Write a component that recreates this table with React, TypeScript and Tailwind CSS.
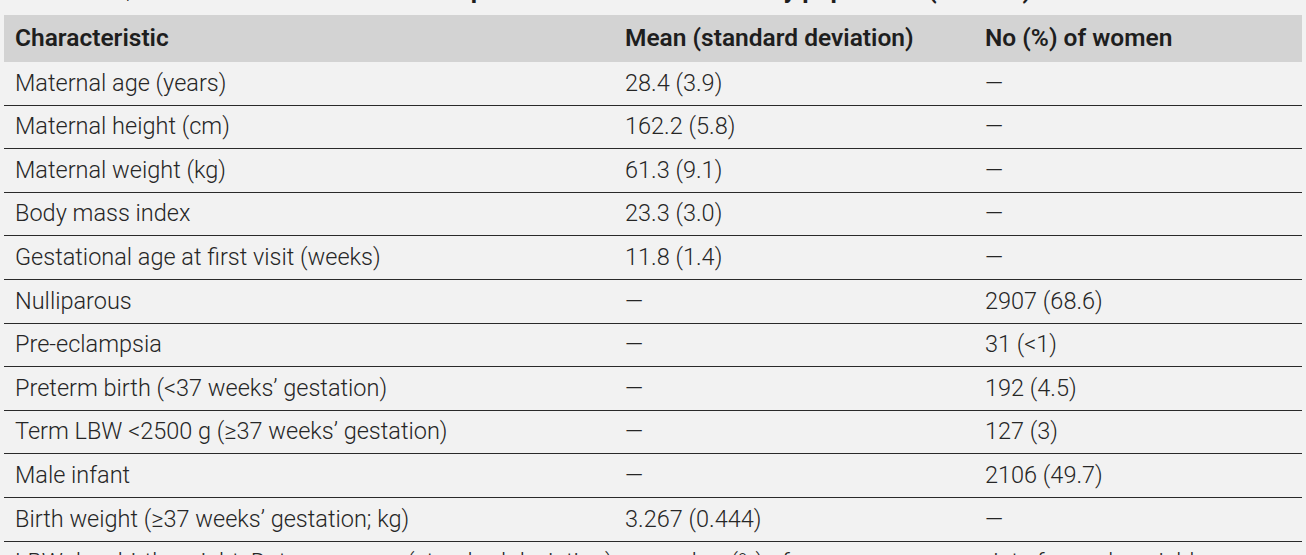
const rows: [string, string, string][] = [
  ["Maternal age (years)", "28.4 (3.9)", "—"],
  ["Maternal height (cm)", "162.2 (5.8)", "—"],
  ["Maternal weight (kg)", "61.3 (9.1)", "—"],
  ["Body mass index", "23.3 (3.0)", "—"],
  ["Gestational age at first visit (weeks)", "11.8 (1.4)", "—"],
  ["Nulliparous", "—", "2907 (68.6)"],
  ["Pre-eclampsia", "—", "31 (<1)"],
  ["Preterm birth (<37 weeks’ gestation)", "—", "192 (4.5)"],
  ["Term LBW <2500 g (≥37 weeks’ gestation)", "—", "127 (3)"],
  ["Male infant", "—", "2106 (49.7)"],
  ["Birth weight (≥37 weeks’ gestation; kg)", "3.267 (0.444)", "—"],
];

export default function App() {
  return (
    <div
      className="w-[1306px] h-[555px] overflow-hidden bg-[#f2f2f2] text-[#262626]"
      style={{ fontFamily: "Roboto, 'Noto Sans', sans-serif" }}
    >
      {/* title line, scrolled almost out of view */}
      <div className="h-[15px] overflow-hidden pl-[15px]">
        <div className="mt-[-23px] text-[25px] leading-[25px] whitespace-nowrap text-[#1e1e1e]">
          <span className="inline-block w-[110px] font-light">Table 1</span>
          <span className="font-light">|</span>
          <span className="ml-[35px] font-bold">
            Baseline characteristics of{" "}
            <span className="[word-spacing:8px]">pooled cohort in the </span>
            study population (n=4237)
          </span>
        </div>
      </div>

      <div className="mx-[4px]">
        <div className="grid grid-cols-[621px_360px_1fr] h-[47px] items-center bg-[#d3d3d3] text-[24.5px] font-semibold text-[#1e1e1e]">
          <div className="pl-[11px]">Characteristic</div>
          <div>Mean (standard deviation)</div>
          <div>No (%) of women</div>
        </div>
        {rows.map(([label, mean, n]) => (
          <div
            key={label}
            className="grid grid-cols-[621px_360px_1fr] h-[43.6px] items-center border-b border-[#2a2a2a] text-[23.5px] font-light"
          >
            <div className="pl-[11px]">{label}</div>
            <div>{mean}</div>
            <div>{n}</div>
          </div>
        ))}
        <div className="pl-[11px] pt-[8px] text-[23.5px] leading-[24px] font-light whitespace-nowrap">
          LBW=low birth weight. Data are mean (standard deviation) or number (%) of women, as appropriate for each variable.
        </div>
      </div>
    </div>
  );
}
